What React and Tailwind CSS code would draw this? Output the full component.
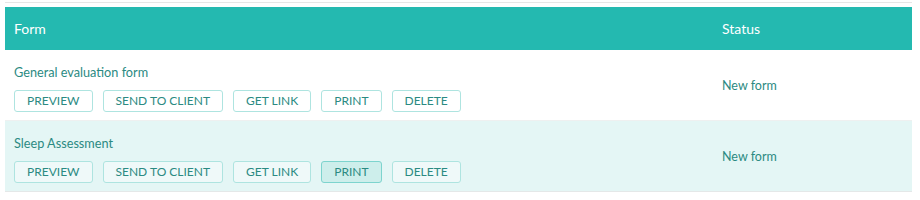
const forms = [
  { name: 'General evaluation form', status: 'New form', active: null, highlight: false },
  { name: 'Sleep Assessment', status: 'New form', active: 'PRINT', highlight: true },
];

const actions = ['PREVIEW', 'SEND TO CLIENT', 'GET LINK', 'PRINT', 'DELETE'];

function ActionButton({ label, active }) {
  return (
    <button
      className={
        active
          ? 'h-[22px] px-[12px] rounded-[3px] border border-[#7dd4ce] bg-[#cdeeeb] text-[12px] leading-none text-[#2b8a82]'
          : 'h-[22px] px-[12px] rounded-[3px] border border-[#aee4e0] bg-white/40 text-[12px] leading-none text-[#2b8a82]'
      }
    >
      {label}
    </button>
  );
}

export default function App() {
  return (
    <div className="w-[920px] h-[200px] bg-white pt-[2px] pl-[5px] pr-[8px]" style={{ fontFamily: 'Lato, "Open Sans", sans-serif' }}>
      <div className="border-t border-[#e6e6e6]">
        <div className="mt-[4px] h-[43px] bg-[#24b9b0] flex items-center text-white text-[14px]">
          <div className="w-[708px] pl-[9px]">Form</div>
          <div className="pl-[9px]">Status</div>
        </div>
        {forms.map((f) => (
          <div
            key={f.name}
            className={
              f.highlight
                ? 'h-[71px] flex items-center border-b border-[#e4e8e8] bg-[#e4f6f5]'
                : 'h-[71px] flex items-center border-b border-[#eef0f0] bg-white'
            }
          >
            <div className="w-[708px] pl-[9px] pt-[5px] flex flex-col gap-[10px]">
              <div className="text-[12.7px] text-[#2b8a82] leading-[16px]">{f.name}</div>
              <div className="flex gap-[10px]">
                {actions.map((a) => (
                  <ActionButton key={a} label={a} active={a === f.active} />
                ))}
              </div>
            </div>
            <div className="pl-[9px] pt-[3px] text-[12.5px] text-[#2b8a82]">{f.status}</div>
          </div>
        ))}
      </div>
    </div>
  );
}
